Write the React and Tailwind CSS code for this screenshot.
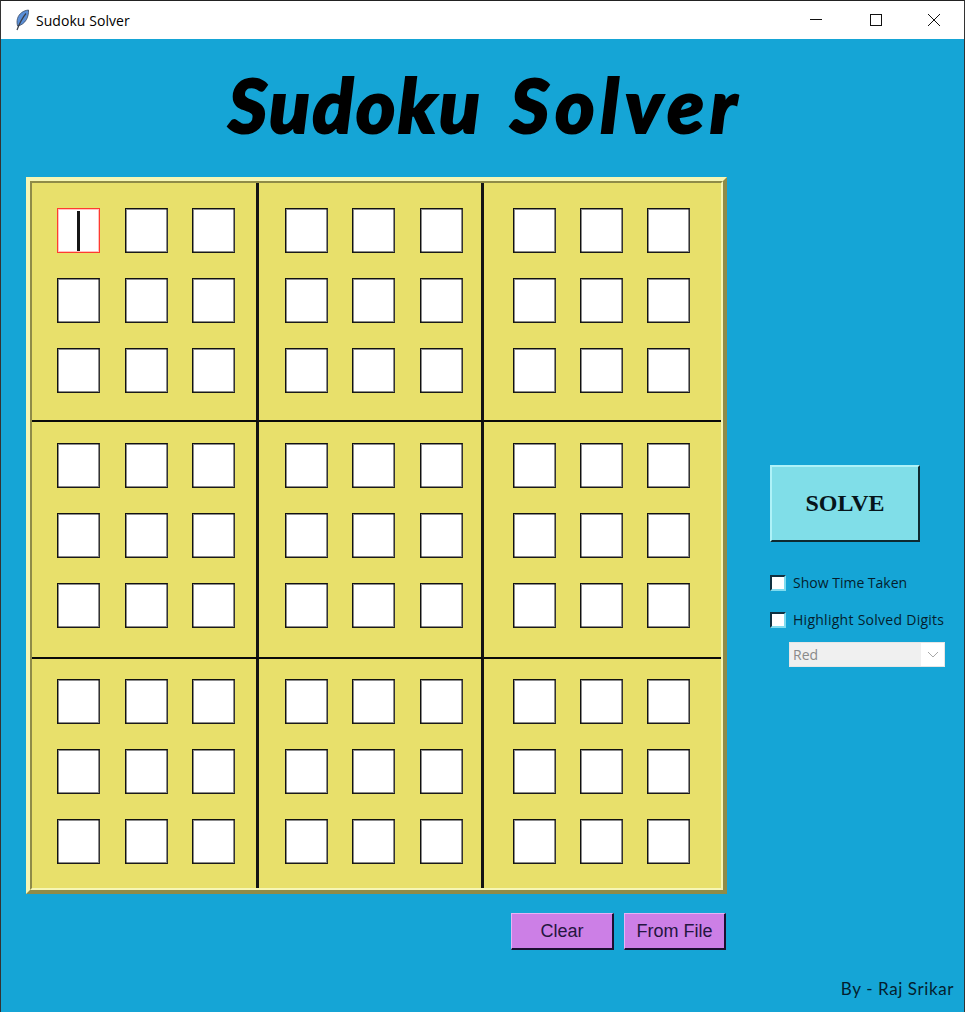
const boxCols = ['grid-cols-[68px_67px_43px]', 'grid-cols-[67px_68px_43px]', 'grid-cols-[67px_67px_43px]'];
const boxPadX = ['pl-[25px]', 'pl-[26px]', 'pl-[29px]'];
const boxPadY = ['pt-[25px]', 'pt-[21px]', 'pt-[20px]'];
const boxLineX = ['border-r-[3px] border-r-[#141414]', 'border-r-[3px] border-r-[#141414]', ''];
const boxLineY = ['border-b-2 border-b-[#0a0a0a]', 'border-b-2 border-b-[#0a0a0a]', ''];

function Cell({ active }) {
  if (active) {
    return (
      <div className="flex h-[45px] w-[43px] items-center justify-center border border-[#ff3b30] shadow-[inset_0_0_0_1px_rgba(255,80,70,0.35)] bg-white">
        <div className="h-[40px] w-[3px] bg-[#161616]" />
      </div>
    );
  }
  return (
    <div className="h-[45px] w-[43px] border border-[#111] border-r-[#333] border-b-[#1a1a1a] bg-white shadow-[inset_1px_1px_0_rgba(0,0,0,0.45),inset_-1px_-1px_0_rgba(0,0,0,0.45)]" />
  );
}

function Box({ r, c }) {
  return (
    <div className={`grid ${boxCols[c]} grid-rows-[70px_70px_45px] ${boxPadX[c]} ${boxPadY[r]} ${boxLineX[c]} ${boxLineY[r]}`}>
      {Array.from({ length: 9 }).map((_, i) => (
        <Cell key={i} active={r === 0 && c === 0 && i === 0} />
      ))}
    </div>
  );
}

function Check({ label, wide }) {
  return (
    <label className="flex items-center gap-[7px] font-['Open_Sans',sans-serif] text-[14px] leading-[18px] text-[#041e2e]">
      <span className="h-[16px] w-[16px] border-2 border-t-[#103040] border-l-[#103040] border-r-[#7fdcf0] border-b-[#7fdcf0] bg-white" />
      <span className={wide ? 'tracking-[0.27px]' : ''}>{label}</span>
    </label>
  );
}

function Feather() {
  return (
    <svg width="16" height="22" viewBox="0 0 16 22">
      <path d="M14.5 1C9.5 1.5 5 4.5 3.5 9.5 2.8 12 2.9 14.5 3.6 17 7 16.5 10.5 14 12.5 10.5 14 7.5 14.8 4 14.5 1Z" fill="#5b8fd8" stroke="#3a4a63" strokeWidth="0.8" />
      <path d="M12 4.5C9 8 6 13 3 21" fill="none" stroke="#3a3f48" strokeWidth="1.2" />
    </svg>
  );
}

function PurpleButton({ children, width }) {
  return (
    <button className={`h-[37px] ${width} border-t border-l border-r-2 border-b-2 border-t-[#e6b3f5] border-l-[#e6b3f5] border-r-[#1a1030] border-b-[#1a1030] bg-[#cc7fe6] font-['Liberation_Sans',sans-serif] text-[18px] text-[#241640]`}>
      {children}
    </button>
  );
}

export default function App() {
  return (
    <div className="flex h-[1012px] w-[965px] flex-col border-x border-t border-x-[#333] border-t-[#222] bg-[#15a5d6]">
      <div className="flex h-[38px] items-center justify-between bg-white pl-[13px] pr-[1px]">
        <div className="flex items-center gap-[6px] font-['Open_Sans',sans-serif] text-[14px] tracking-[0.05px] text-black">
          <Feather />
          <span>Sudoku Solver</span>
        </div>
        <div className="flex items-center">
          <div className="flex h-[38px] w-[60px] items-center justify-center pr-[2px]">
            <svg width="12" height="12" viewBox="0 0 12 12"><path d="M0 5.5H12" stroke="#111" /></svg>
          </div>
          <div className="flex h-[38px] w-[58px] items-center justify-center">
            <svg width="12" height="12" viewBox="0 0 12 12"><rect x="0.5" y="0.5" width="11" height="11" fill="none" stroke="#111" /></svg>
          </div>
          <div className="flex h-[38px] w-[58px] items-center justify-center">
            <svg width="12" height="12" viewBox="0 0 12 12"><path d="M0 0L12 12M12 0L0 12" stroke="#111" /></svg>
          </div>
        </div>
      </div>

      <div className="flex h-[138px] items-center justify-center pl-[6px] pb-[8px]">
        <h1 className="font-['Lato',sans-serif] text-[75px] font-black italic leading-none text-black [word-spacing:12px] [-webkit-text-stroke:2px_black]">
          <span className="tracking-[2.6px]">Sudoku</span> <span className="tracking-[6px]">Solver</span>
        </h1>
      </div>

      <div className="flex pl-[25px]">
        <div className="h-[717px] w-[701px] border-4 border-t-[#f6f6b4] border-l-[#f6f6b4] border-r-[#8f8b48] border-b-[#8f8b48]">
          <div className="grid h-full grid-cols-[227px_225px_1fr] grid-rows-[239px_237px_1fr] border-2 border-t-[#8f8b48] border-l-[#8f8b48] border-r-[#f6f6b4] border-b-[#f6f6b4] bg-[#e8e06b]">
            {[0, 1, 2].flatMap((r) => [0, 1, 2].map((c) => <Box key={`${r}${c}`} r={r} c={c} />))}
          </div>
        </div>

        <div className="ml-[43px] flex flex-col pt-[288px]">
          <button className="h-[77px] w-[150px] border-2 border-t-[#aef2f8] border-l-[#aef2f8] border-r-[#0e2a30] border-b-[#0e2a30] bg-[#80dee8] pb-[2px] font-['Liberation_Serif',serif] text-[24px] font-bold text-[#06141a]">
            SOLVE
          </button>
          <div className="mt-[32px]"><Check label="Show Time Taken" /></div>
          <div className="mt-[19px]"><Check label="Highlight Solved Digits" wide /></div>
          <div className="mt-[13px] ml-[19px] flex h-[25px] w-[156px] items-center border border-[#e6e6e6] bg-[#f0f0f0] font-['Open_Sans',sans-serif] text-[14px] text-[#8a8a8a]">
            <span className="flex-1 pl-[3px]">Red</span>
            <span className="flex h-full w-[23px] items-center justify-center bg-white">
              <svg width="12" height="7" viewBox="0 0 12 7"><path d="M1 1L6 6L11 1" fill="none" stroke="#a8a8a8" /></svg>
            </span>
          </div>
        </div>
      </div>

      <div className="mt-[19px] flex w-[725px] justify-end gap-[10px]">
        <PurpleButton width="w-[103px]">Clear</PurpleButton>
        <PurpleButton width="w-[102px]">From File</PurpleButton>
      </div>

      <div className="mt-[27px] flex justify-end pr-[10px] font-['Lato',sans-serif] text-[17px] leading-[24px] tracking-[0.6px] text-[#041e2e]">
        By - Raj Srikar
      </div>
    </div>
  );
}
